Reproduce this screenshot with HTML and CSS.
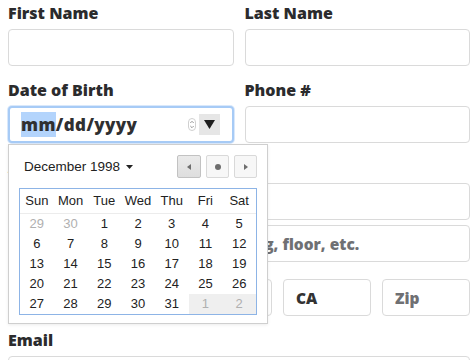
FILE: index.html
```html
<!DOCTYPE html>
<html>
<head>
<meta charset="utf-8">
<link rel="stylesheet" href="styles.css">
</head>
<body>
<div class="form">
  <div class="row two">
    <div class="field">
      <div class="label">First Name</div>
      <div class="input"></div>
    </div>
    <div class="field">
      <div class="label">Last Name</div>
      <div class="input"></div>
    </div>
  </div>

  <div class="row two">
    <div class="field dob">
      <div class="label">Date of Birth</div>
      <div class="input focus date">
        <span class="sel">mm</span><span>/dd/yyyy</span>
        <span class="grow"></span>
        <svg class="spin" width="8" height="13" viewBox="0 0 8 13">
          <rect x="0.5" y="0.5" width="7" height="12" rx="3.5" fill="#fff" stroke="#d0d0d0"/>
          <path d="M2.3 5 L4 3.3 L5.7 5" fill="none" stroke="#8a8a8a" stroke-width="0.9"/>
          <path d="M2.3 8 L4 9.7 L5.7 8" fill="none" stroke="#8a8a8a" stroke-width="0.9"/>
        </svg>
        <span class="ddbtn">
          <svg width="11" height="9" viewBox="0 0 11 9"><polygon points="0,0 11,0 5.5,9" fill="#1e1e1e"/></svg>
        </span>
      </div>

      <div class="calendar">
        <div class="cal-head">
          <span class="month">December 1998</span>
          <svg class="caret" width="7" height="4" viewBox="0 0 7 4"><polygon points="0,0 7,0 3.5,4" fill="#222"/></svg>
          <span class="grow"></span>
          <span class="nav pressed"><svg width="4" height="6" viewBox="0 0 4 6"><polygon points="4,0 4,6 0,3" fill="#6e6e6e"/></svg></span>
          <span class="nav"><svg width="6" height="6" viewBox="0 0 6 6"><circle cx="3" cy="3" r="3" fill="#6e6e6e"/></svg></span>
          <span class="nav"><svg width="4" height="6" viewBox="0 0 4 6"><polygon points="0,0 0,6 4,3" fill="#6e6e6e"/></svg></span>
        </div>
        <div class="cal-table">
          <div class="wk">Sun</div><div class="wk">Mon</div><div class="wk">Tue</div><div class="wk">Wed</div><div class="wk">Thu</div><div class="wk">Fri</div><div class="wk">Sat</div>
          <div class="d other">29</div><div class="d other">30</div><div class="d">1</div><div class="d">2</div><div class="d">3</div><div class="d">4</div><div class="d">5</div>
          <div class="d">6</div><div class="d">7</div><div class="d">8</div><div class="d">9</div><div class="d">10</div><div class="d">11</div><div class="d">12</div>
          <div class="d">13</div><div class="d">14</div><div class="d">15</div><div class="d">16</div><div class="d">17</div><div class="d">18</div><div class="d">19</div>
          <div class="d">20</div><div class="d">21</div><div class="d">22</div><div class="d">23</div><div class="d">24</div><div class="d">25</div><div class="d">26</div>
          <div class="d">27</div><div class="d">28</div><div class="d">29</div><div class="d">30</div><div class="d">31</div><div class="d other next">1</div><div class="d other next">2</div>
        </div>
      </div>
    </div>
    <div class="field">
      <div class="label">Phone #</div>
      <div class="input"></div>
    </div>
  </div>

  <div class="row addr">
    <div class="label">Address</div>
    <div class="input"></div>
    <div class="input line2"><span class="ph">Apartment, suite, unit, building, floor, etc.</span></div>
  </div>

  <div class="row three">
    <div class="input"><span class="ph">City</span></div>
    <div class="input">CA</div>
    <div class="input"><span class="ph">Zip</span></div>
  </div>

  <div class="row">
    <div class="label">Email</div>
    <div class="input"></div>
  </div>
</div>
</body>
</html>
```

FILE: styles.css
```css
* { box-sizing: border-box; }

body {
  margin: 0;
  background: #fff;
  font-family: "Open Sans", "Lato", "DejaVu Sans", sans-serif;
  color: #333;
}

.form {
  padding: 3px 4px 0 8px;
}

.row {
  margin-bottom: 14px;
}

.two {
  display: grid;
  grid-template-columns: 1fr 1fr;
  column-gap: 11px;
}

.three {
  display: grid;
  grid-template-columns: 3fr 1fr 1fr;
  column-gap: 11px;
}

.addr {
  margin-bottom: 17px;
}

.label {
  font-weight: 800;
  font-size: 16px;
  line-height: 20px;
  margin-bottom: 6px;
  color: #2b2b2d;
}

.input {
  height: 37px;
  border: 1px solid #dadada;
  border-radius: 4px;
  background: #fff;
  display: flex;
  align-items: center;
  padding: 0 12px;
  font-weight: 800;
  font-size: 15.5px;
  color: #333;
  white-space: nowrap;
  overflow: hidden;
}

.line2 {
  margin-top: 5px;
}

.ph {
  color: #6f7073;
}

.dob {
  position: relative;
}

.focus {
  border: 2px solid #a7cbf6;
  box-shadow: 0 0 0 1px #d9e8fb;
}

.date {
  padding: 0 12px 0 11px;
  font-size: 17px;
  letter-spacing: 0.4px;
  color: #2f2f31;
}

.sel {
  background: #b3d4fc;
  line-height: 25px;
}

.grow {
  flex: 1;
}

.spin {
  display: block;
  margin-right: 3px;
}

.ddbtn {
  width: 21px;
  height: 21px;
  background: #e6e6e6;
  display: flex;
  align-items: center;
  justify-content: center;
}

.ddbtn svg {
  display: block;
}

/* calendar popup (overlay) */
.calendar {
  position: absolute;
  left: 0;
  top: calc(100% + 1px);
  width: 260px;
  height: 180px;
  background: #fff;
  border: 1px solid #cfcfcf;
  box-shadow: 0 1px 3px rgba(0,0,0,0.08);
  padding: 10px;
  font-family: "Liberation Sans", Arial, sans-serif;
  font-size: 13px;
  color: #222;
  z-index: 5;
}

.cal-head {
  display: flex;
  align-items: center;
  height: 23px;
}

.month {
  padding-left: 5px;
  font-size: 13.5px;
}

.caret {
  display: block;
  margin-left: 6px;
}

.nav {
  width: 23px;
  height: 23px;
  margin-left: 5px;
  border: 1px solid #d9d9d9;
  border-radius: 2px;
  background: #f7f7f7;
  display: flex;
  align-items: center;
  justify-content: center;
}

.nav.pressed {
  width: 24px;
  border-color: #c2c2c2;
  background: linear-gradient(#eaeaea, #dedede);
}

.nav svg {
  display: block;
}

.cal-table {
  margin-top: 10px;
  border: 1px solid #8db4e6;
  display: grid;
  grid-template-columns: repeat(7, 1fr);
  grid-template-rows: 25px repeat(5, 20px);
  line-height: 14px;
}

.wk {
  display: flex;
  align-items: center;
  justify-content: center;
  border-bottom: 1px solid #ececec;
}

.d {
  display: flex;
  align-items: center;
  justify-content: center;
}

.d.other {
  color: #b0b0b0;
}

.d.next {
  background: #efefef;
}
```
